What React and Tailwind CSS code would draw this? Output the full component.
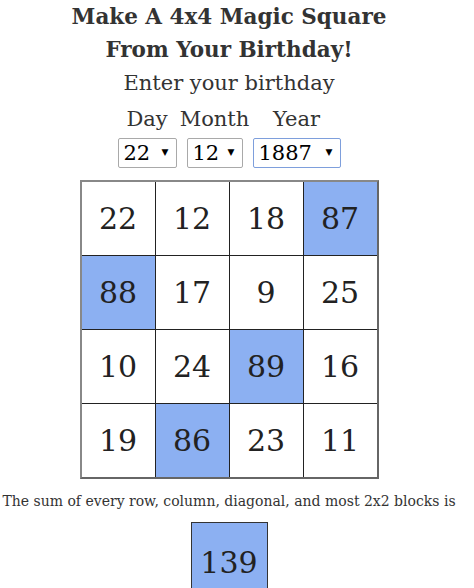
import React from "react";

const grid = [
  [22, 12, 18, 87],
  [88, 17, 9, 25],
  [10, 24, 89, 16],
  [19, 86, 23, 11],
];

// highlighted cells hold the birth year digits
const blueCells = ["0-3", "1-0", "2-2", "3-1"];

const Select = ({ value, focused }) => (
  <div
    className={`relative h-[30px] w-full rounded-[2px] border bg-white ${
      focused ? "border-[#7e9fdc]" : "border-[#a9a9a9]"
    }`}
  >
    <div className="pl-[5px] text-[21px] leading-[29px] text-black">{value}</div>
    <span className="absolute right-[7px] top-[7px] text-[9px] text-black">▼</span>
  </div>
);

const Field = ({ label, value, width, focused }) => (
  <div className={`flex flex-col items-center ${width}`}>
    <span className="text-[21px] leading-[38px] text-[#333] whitespace-nowrap">{label}</span>
    <Select value={value} focused={focused} />
  </div>
);

const App = () => {
  return (
    <div className="w-[474px] h-[588px] overflow-hidden bg-white text-[#333] font-['DejaVu_Serif',serif]">
      <div className="w-[458px] flex flex-col items-center">
        <h1 className="text-[21.5px] font-bold leading-[33px] text-center text-[#333]">
          Make A 4x4 Magic Square
          <br />
          From Your Birthday!
        </h1>
        <p className="text-[21px] leading-[34px] text-[#333]">Enter your birthday</p>
        <div className="flex gap-[10px]">
          <Field label="Day" value="22" width="w-[59px]" />
          <Field label="Month" value="12" width="w-[56px]" />
          <Field label="Year" value="1887" width="w-[88px]" focused />
        </div>
        <div className="mt-[12px] border-2 border-[#666] border-t-[#888] border-l-[#888]">
          <div className="grid grid-cols-4 bg-[#222] gap-[1px]">
            {grid.map((row, r) =>
              row.map((n, c) => (
                <div
                  key={`${r}-${c}`}
                  className={`w-[73px] h-[73px] flex items-center justify-center text-[30px] text-[#222] ${
                    blueCells.includes(`${r}-${c}`) ? "bg-[#8cb0f2]" : "bg-white"
                  }`}
                >
                  {n}
                </div>
              ))
            )}
          </div>
        </div>
        <p className="mt-[11px] text-[14px] leading-[22px] text-[#333] whitespace-nowrap">
          The sum of every row, column, diagonal, and most 2x2 blocks is
        </p>
        <div className="mt-[10px] w-[77px] h-[80px] border border-[#333] bg-[#8cb0f2] flex items-center justify-center text-[30px] text-[#222]">
          139
        </div>
      </div>
    </div>
  );
};

export default App;
